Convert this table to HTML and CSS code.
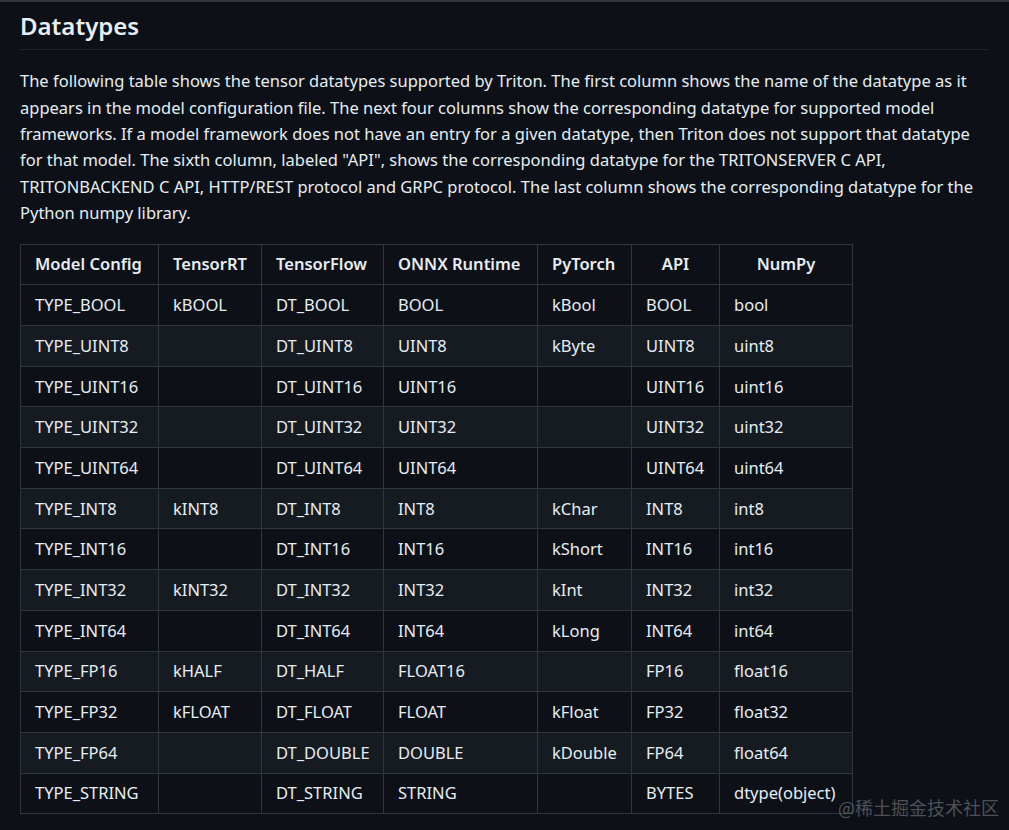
FILE: index.html
```html
<!DOCTYPE html>
<html>
<head>
<meta charset="utf-8">
<link rel="stylesheet" href="styles.css">
</head>
<body>
<div class="topline"></div>
<article class="markdown">
  <h2 class="heading">Datatypes</h2>
  <p class="intro">The following table shows the tensor datatypes supported by Triton. The first column shows the name of the datatype as it appears in the model configuration file. The next four columns show the corresponding datatype for supported model frameworks. If a model framework does not have an entry for a given datatype, then Triton does not support that datatype for that model. The sixth column, labeled "API", shows the corresponding datatype for the TRITONSERVER C API, TRITONBACKEND C API, HTTP/REST protocol and GRPC protocol. The last column shows the corresponding datatype for the Python numpy library.</p>
  <table class="dtable">
    <colgroup>
      <col class="c1"><col class="c2"><col class="c3"><col class="c4"><col class="c5"><col class="c6"><col class="c7">
    </colgroup>
    <thead>
      <tr><th>Model Config</th><th>TensorRT</th><th>TensorFlow</th><th>ONNX Runtime</th><th>PyTorch</th><th class="center">API</th><th class="center">NumPy</th></tr>
    </thead>
    <tbody>
      <tr><td>TYPE_BOOL</td><td>kBOOL</td><td>DT_BOOL</td><td>BOOL</td><td>kBool</td><td>BOOL</td><td>bool</td></tr>
      <tr><td>TYPE_UINT8</td><td></td><td>DT_UINT8</td><td>UINT8</td><td>kByte</td><td>UINT8</td><td>uint8</td></tr>
      <tr><td>TYPE_UINT16</td><td></td><td>DT_UINT16</td><td>UINT16</td><td></td><td>UINT16</td><td>uint16</td></tr>
      <tr><td>TYPE_UINT32</td><td></td><td>DT_UINT32</td><td>UINT32</td><td></td><td>UINT32</td><td>uint32</td></tr>
      <tr><td>TYPE_UINT64</td><td></td><td>DT_UINT64</td><td>UINT64</td><td></td><td>UINT64</td><td>uint64</td></tr>
      <tr><td>TYPE_INT8</td><td>kINT8</td><td>DT_INT8</td><td>INT8</td><td>kChar</td><td>INT8</td><td>int8</td></tr>
      <tr><td>TYPE_INT16</td><td></td><td>DT_INT16</td><td>INT16</td><td>kShort</td><td>INT16</td><td>int16</td></tr>
      <tr><td>TYPE_INT32</td><td>kINT32</td><td>DT_INT32</td><td>INT32</td><td>kInt</td><td>INT32</td><td>int32</td></tr>
      <tr><td>TYPE_INT64</td><td></td><td>DT_INT64</td><td>INT64</td><td>kLong</td><td>INT64</td><td>int64</td></tr>
      <tr><td>TYPE_FP16</td><td>kHALF</td><td>DT_HALF</td><td>FLOAT16</td><td></td><td>FP16</td><td>float16</td></tr>
      <tr><td>TYPE_FP32</td><td>kFLOAT</td><td>DT_FLOAT</td><td>FLOAT</td><td>kFloat</td><td>FP32</td><td>float32</td></tr>
      <tr><td>TYPE_FP64</td><td></td><td>DT_DOUBLE</td><td>DOUBLE</td><td>kDouble</td><td>FP64</td><td>float64</td></tr>
      <tr><td>TYPE_STRING</td><td></td><td>DT_STRING</td><td>STRING</td><td></td><td>BYTES</td><td>dtype(object)</td></tr>
    </tbody>
  </table>
</article>
<div class="watermark">@稀土掘金技术社区</div>
</body>
</html>
```

FILE: styles.css
```css
html, body {
  margin: 0;
  padding: 0;
  background: #0d1117;
}
body {
  width: 1009px;
  height: 830px;
  overflow: hidden;
  position: relative;
  font-family: "Noto Sans", "Open Sans", sans-serif;
  color: #e6edf3;
}
.topline {
  height: 2px;
  background: #30363d;
}
.markdown {
  padding: 0 21px 0 20px;
}
.heading {
  margin: 8px 0 0 0;
  padding-bottom: 8px;
  font-size: 24px;
  font-weight: 600;
  line-height: 1.3;
  border-bottom: 1px solid #21262d;
}
.intro {
  margin: 18px 0 17px 0;
  font-size: 16.5px;
  line-height: 26.4px;
}
.dtable {
  border-collapse: collapse;
  table-layout: fixed;
  width: 833px;
  font-size: 16.5px;
}
.c1 { width: 138px; }
.c2 { width: 103px; }
.c3 { width: 122px; }
.c4 { width: 154px; }
.c5 { width: 94px; }
.c6 { width: 88px; }
.c7 { width: 133px; }
.dtable th, .dtable td {
  border: 1px solid #30363d;
  padding: 0 14px;
  height: 39.7px;
  text-align: left;
  white-space: nowrap;
  line-height: 26px;
}
.dtable th {
  font-weight: 600;
}
.dtable th.center {
  text-align: center;
}
.dtable tbody tr:nth-child(2n) {
  background: #161b22;
}
.watermark {
  position: absolute;
  right: 10px;
  bottom: 10px;
  font-family: "Noto Sans CJK SC", sans-serif;
  font-size: 18px;
  color: rgba(200, 205, 210, 0.35);
}
```
